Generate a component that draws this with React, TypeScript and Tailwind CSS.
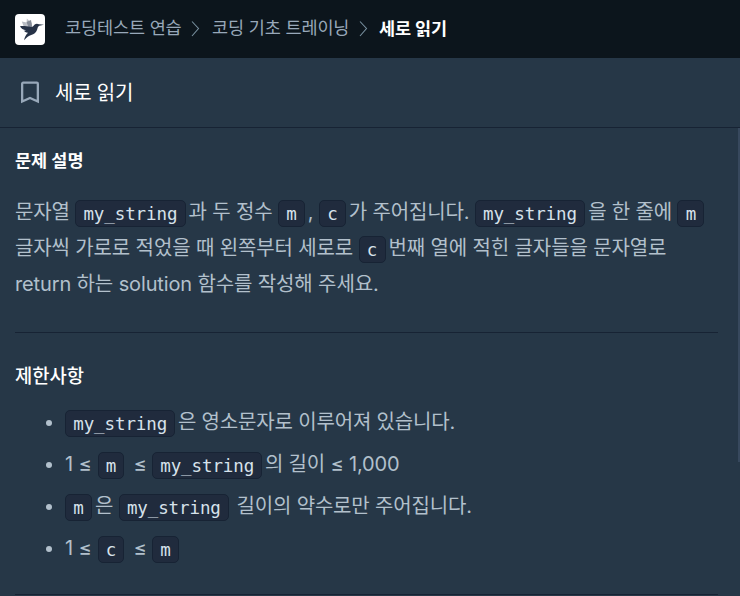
import React from "react";

interface CodeProps {
  children: React.ReactNode;
  className?: string;
}

const Code = ({ children, className = "" }: CodeProps) => {
  return (
    <code
      className={`inline-block h-[27px] rounded-[5px] border border-[#172334] bg-[#202b3d] px-[7.25px] align-[-1px] font-['DejaVu_Sans_Mono','Liberation_Mono',monospace] text-[17.5px] leading-[26px] tracking-[-0.1px] text-[#d7e2eb] ${className}`}
    >
      {children}
    </code>
  );
};

const Chevron = () => {
  return (
    <svg className="h-[18px] w-[10px] shrink-0" viewBox="0 0 10 18" fill="none" stroke="#78909f" strokeWidth="1.1">
      <path d="M1 1.500 7.500 8.500l-6.500 7.500" />
    </svg>
  );
};

const Logo = () => {
  return (
    <svg className="h-[31px] w-[30px] shrink-0" viewBox="0 0 30 31">
      <rect width="30" height="31" rx="4" fill="#fff" />
      <path d="M6.800 7.500 11.500 8.500l4 4-7-.5Z" fill="#b9bdc4" />
      <path d="m11.800 4.500 5.200 4.500-.5 3.500-5-.5Z" fill="#c3c6cc" />
      <path d="m11.500 8 4.500-2 1.200 7-4-.5Z" fill="#858c98" />
      <path
        d="M5 12.200c3.500-.4 8 .3 12 .8 1.200-.5 1.600-1.600 2.700-2.500 1.100-.9 2.900-1 4.300-.2l5 .5-4.700.9c-1.600.6-1.500 2.300-2.300 4.200-1 2.700-3 4.100-5.800 5-2.500.8-4.500 1.900-7 5.400.2-2.700 1.400-5.300 3.800-7.600-2.200 0-3.500-.9-4.300-2.100.9.100 1.600 0 2.300-.4C8.300 15.700 6 14.600 5 12.200Z"
        fill="#263247"
      />
    </svg>
  );
};

const items = [
  <><Code>my_string</Code><span className="ml-[2.5px]">은 영소문자로 이루어져 있습니다.</span></>,
  <>1 ≤ <Code className="ml-[0.6px]">m</Code><span className="ml-[3.5px]"> ≤ </span><Code>my_string</Code><span className="ml-[2.5px]">의 길이 ≤ 1,000</span></>,
  <><Code>m</Code><span className="ml-[3px]">은 </span><Code>my_string</Code><span className="ml-[2px]"> 길이의 약수로만 주어집니다.</span></>,
  <>1 ≤ <Code className="ml-[0.6px]">c</Code><span className="ml-[3.5px]"> ≤ </span><Code>m</Code></>,
];

const App = () => {
  return (
    <div className="flex h-[596px] w-[740px] flex-col overflow-hidden bg-[#263747] font-['Inter','Noto_Sans_CJK_KR',sans-serif] text-[#b2c0cc]">
      <header className="flex h-[58px] shrink-0 items-center bg-[#0c151c] pl-[15px] text-[17.5px] tracking-[-0.13px] whitespace-nowrap text-[#98a8b9]">
        <Logo />
        <span className="ml-5 w-[126px] pb-[2px]">코딩테스트 연습</span>
        <Chevron />
        <span className="ml-[11px] w-[147px] pb-[2px]">코딩 기초 트레이닝</span>
        <Chevron />
        <strong className="ml-[10px] font-bold text-white">세로 읽기</strong>
      </header>
      <div className="flex h-[70px] shrink-0 items-center border-b border-[#172334] pl-[20px]">
        <svg className="h-[24px] w-[20px]" viewBox="0 0 20 24" fill="none" stroke="#98a8b9" strokeWidth="2.3">
          <path d="M2.150 20.500V2.700a1 1 0 0 1 1-1h13.700a1 1 0 0 1 1 1v17.800L10 17Z" />
        </svg>
        <h1 className="ml-[15px] text-[20px] font-normal tracking-[-0.2px] text-white">세로 읽기</h1>
      </div>
      <main className="flex min-h-0 flex-1">
        <div className="w-[738px] pr-5 pl-[15px]">
          <h2 className="mt-[20px] text-[17.5px] leading-[26px] font-bold text-white">문제 설명</h2>
          <div className="mt-[20px] text-[20px] leading-[36px] tracking-[-0.13px] whitespace-nowrap">
            <p className="h-[36px] tracking-[-0.17px]">
              문자열 <Code>my_string</Code><span className="ml-[3px]">과 두 정수 </span><Code>m</Code>
              <span className="ml-[3px]">, </span><Code>c</Code><span className="ml-[3px]">가 주어집니다. </span>
              <Code>my_string</Code><span className="ml-[3px]">을 한 줄에 </span><Code>m</Code>
            </p>
            <p className="h-[36px]">
              글자씩 가로로 적었을 때 왼쪽부터 세로로 <Code>c</Code><span className="ml-[3px]">번째 열에 적힌 글자들을 문자열로</span>
            </p>
            <p className="h-[36px]">return 하는 solution 함수를 작성해 주세요.</p>
          </div>
          <hr className="mt-[30px] border-[#172334]" />
          <h2 className="mt-[31px] text-[18.75px] leading-[26px] font-medium text-white">제한사항</h2>
          <ul className="mt-[14px] text-[20px] leading-[36px] tracking-[-0.17px] whitespace-nowrap">
            {items.map((item, i) => (
              <li key={i} className="mb-[6px] flex h-[36px]">
                <span className="mt-[16px] mr-[13px] ml-[31px] size-[6px] shrink-0 rounded-full bg-[#b2c0cc]" />
                <div>{item}</div>
              </li>
            ))}
          </ul>
          <hr className="mt-[28px] border-[#172334]" />
        </div>
        <div className="h-[334px] w-[2px] bg-[#37485d]" />
      </main>
    </div>
  );
};

export default App;
